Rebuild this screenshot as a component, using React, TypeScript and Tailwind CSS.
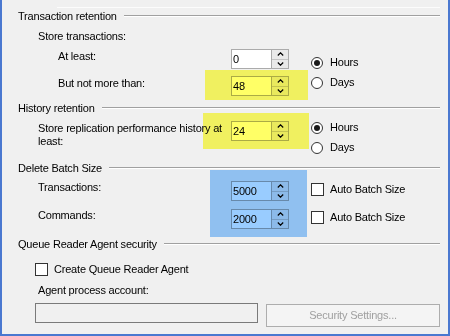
import React from "react";

const Chevron = ({ up }: { up?: boolean }) => (
  <svg width="7" height="4" viewBox="0 0 7 4">
    <path
      d={up ? "M0.8 3.5 L3.5 0.8 L6.2 3.5" : "M0.8 0.5 L3.5 3.2 L6.2 0.5"}
      fill="none"
      stroke="#000"
      strokeWidth="1.2"
    />
  </svg>
);

function Spin({ value }: { value: string }) {
  return (
    <div className="flex h-[20px] w-[58px] shrink-0 border border-[#ababab] bg-white">
      <div className="flex-1 pl-[1px] leading-[18px] text-black">{value}</div>
      <div className="flex w-[17px] flex-col border-l border-[#ababab] bg-[#e9e9e9]">
        <div className="flex flex-1 items-center justify-center border-b border-[#c4c4c4]">
          <Chevron up />
        </div>
        <div className="flex flex-1 items-center justify-center">
          <Chevron />
        </div>
      </div>
    </div>
  );
}

function Heading({ title }: { title: string }) {
  return (
    <div className="flex h-[13px] items-start pl-[16px] pr-[8px]">
      <span className="whitespace-nowrap leading-[13px]">{title}</span>
      <div className="ml-[7px] mt-[5px] flex-1 border-b border-t border-b-white border-t-[#a0a0a0]" />
    </div>
  );
}

function Radio({ label, checked }: { label: string; checked?: boolean }) {
  return (
    <div className="flex h-[13px] items-center">
      <div className="flex h-[12px] w-[12px] items-center justify-center rounded-full border border-[#333] bg-white">
        {checked && <div className="h-[6px] w-[6px] rounded-full bg-[#1a1a1a]" />}
      </div>
      <span className="ml-[7px] leading-[13px]">{label}</span>
    </div>
  );
}

function Check({ label }: { label: string }) {
  return (
    <div className="flex items-start">
      <div className="h-[13px] w-[13px] shrink-0 border border-[#333] bg-white" />
      <span className="ml-[6px] whitespace-nowrap leading-[13px]">{label}</span>
    </div>
  );
}

export default function App() {
  return (
    <div
      className="relative h-[336px] w-[450px] overflow-hidden border-b-2 border-l-2 border-r-2 border-[#4a78d0] bg-[#f0f0f0] text-[11px] tracking-[-0.2px] text-black"
      style={{ fontFamily: '"Liberation Sans", Arial, sans-serif' }}
    >
      <div className="h-[7px]" />
      <div className="ml-[55px] mr-[8px] h-px bg-white/80" />

      {/* Transaction retention */}
      <div className="mt-[2px]">
        <Heading title="Transaction retention" />
      </div>
      <div className="mt-[7px] pl-[36px] leading-[13px]">Store transactions:</div>
      <div className="mt-[6px] flex pl-[56px]">
        <div className="flex flex-col">
          <div className="flex h-[20px]">
            <span className="w-[173px] pt-px leading-[13px]">At least:</span>
            <Spin value="0" />
          </div>
          <div className="mt-[7px] flex h-[20px]">
            <span className="w-[173px] pt-px leading-[13px]">But not more than:</span>
            <Spin value="48" />
          </div>
        </div>
        <div className="ml-[22px] mt-[7px] flex flex-col gap-[7px]">
          <Radio label="Hours" checked />
          <Radio label="Days" />
        </div>
      </div>

      {/* History retention */}
      <div className="mt-[6px]">
        <Heading title="History retention" />
      </div>
      <div className="mt-[6px] flex pl-[36px]">
        <span className="relative z-10 w-[193px] pt-px leading-[13px]">
          Store replication performance history at
          <br />
          least:
        </span>
        <Spin value="24" />
        <div className="ml-[22px] flex flex-col gap-[7px]">
          <Radio label="Hours" checked />
          <Radio label="Days" />
        </div>
      </div>

      {/* Delete Batch Size */}
      <div className="mt-[8px]">
        <Heading title="Delete Batch Size" />
      </div>
      <div className="mt-[6px] flex h-[20px] pl-[36px]">
        <span className="w-[193px] leading-[13px]">Transactions:</span>
        <Spin value="5000" />
        <div className="ml-[22px] mt-[2px]">
          <Check label="Auto Batch Size" />
        </div>
      </div>
      <div className="mt-[8px] flex h-[20px] pl-[36px]">
        <span className="w-[193px] leading-[13px]">Commands:</span>
        <Spin value="2000" />
        <div className="ml-[22px] mt-[2px]">
          <Check label="Auto Batch Size" />
        </div>
      </div>

      {/* Queue Reader Agent security */}
      <div className="mt-[9px]">
        <Heading title="Queue Reader Agent security" />
      </div>
      <div className="mt-[12px] pl-[33px]">
        <Check label="Create Queue Reader Agent" />
      </div>
      <div className="mt-[8px] pl-[36px] leading-[13px]">Agent process account:</div>
      <div className="mt-[6px] flex items-start pl-[33px]">
        <div className="h-[20px] w-[223px] border border-[#7a7a7a] bg-[#f0f0f0]" />
        <div className="ml-[8px] mt-px flex h-[23px] w-[174px] items-center justify-center border border-[#adadad] bg-[#f4f4f4] text-[#a0a0a0]">
          Security Settings...
        </div>
      </div>

      {/* highlight annotations */}
      <div className="pointer-events-none absolute left-[203px] top-[70px] h-[30px] w-[103px] bg-[#ffff66] mix-blend-multiply" />
      <div className="pointer-events-none absolute left-[201px] top-[113px] h-[36px] w-[106px] bg-[#ffff66] mix-blend-multiply" />
      <div className="pointer-events-none absolute left-[208px] top-[170px] h-[67px] w-[97px] bg-[#99ccff] mix-blend-multiply" />
    </div>
  );
}
